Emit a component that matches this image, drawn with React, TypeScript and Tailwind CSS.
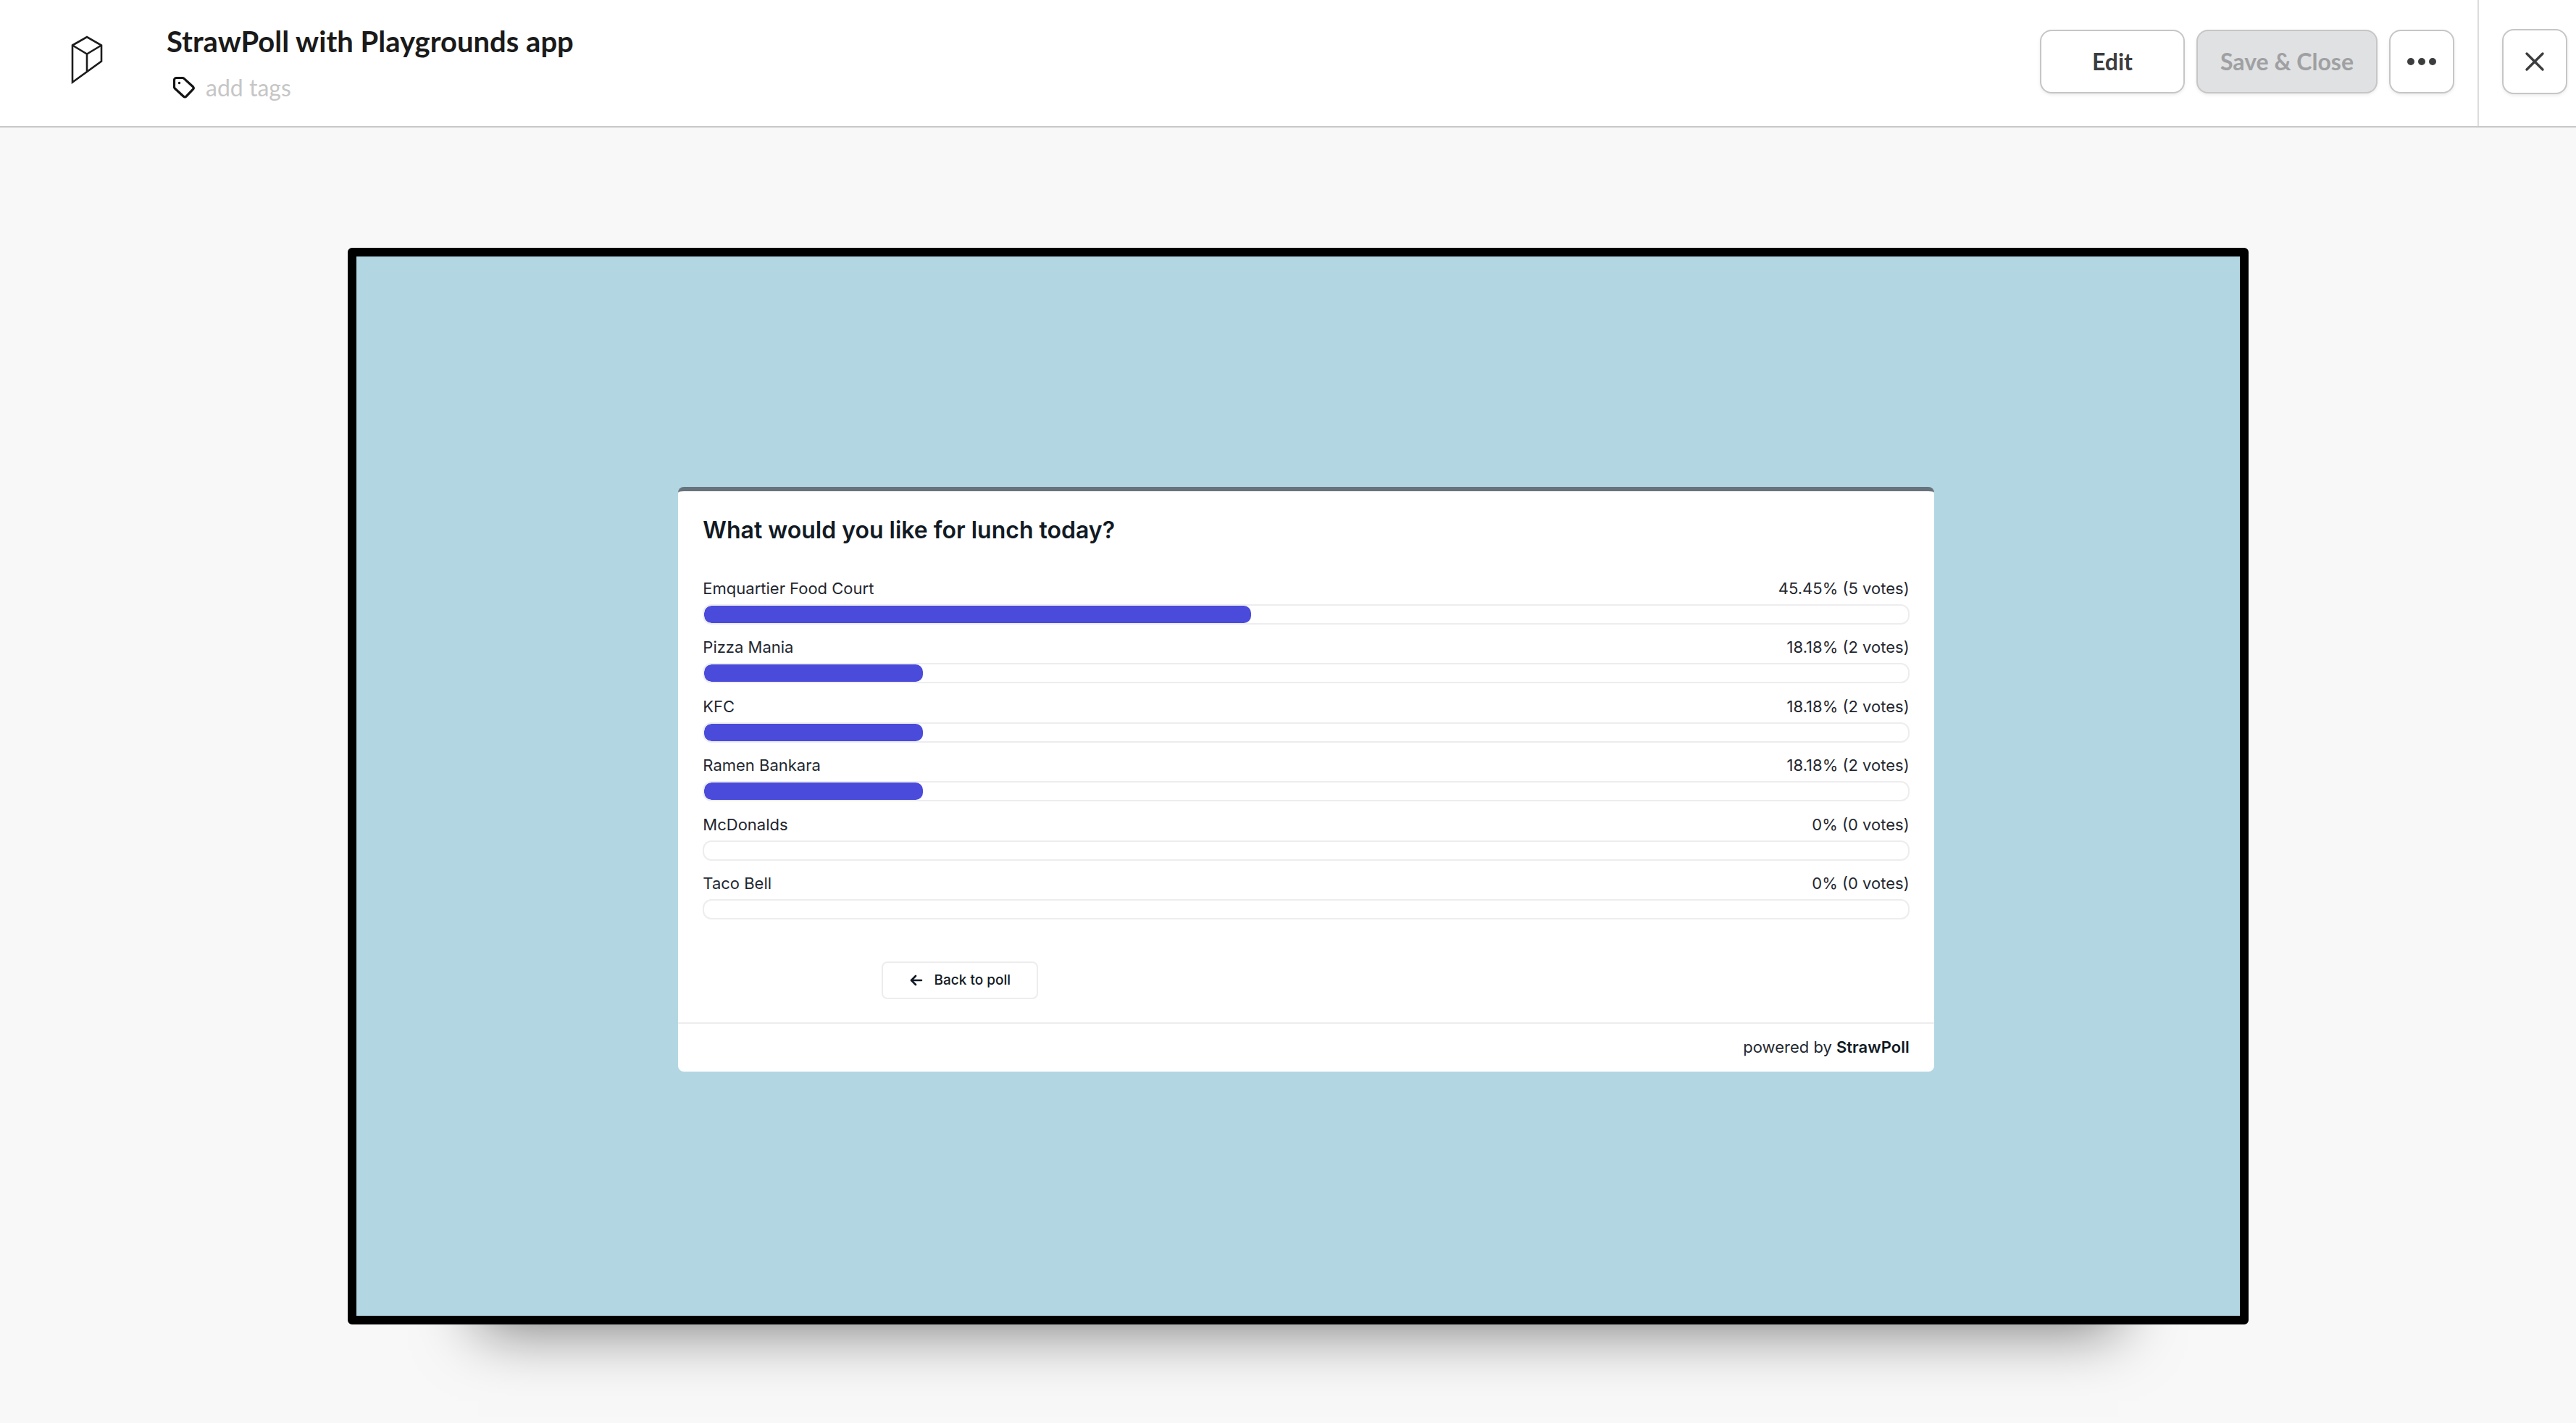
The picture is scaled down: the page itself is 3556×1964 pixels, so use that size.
import React from "react";

type Option = { name: string; percent: number; votes: number };

const options: Option[] = [
  { name: "Emquartier Food Court", percent: 45.45, votes: 5 },
  { name: "Pizza Mania", percent: 18.18, votes: 2 },
  { name: "KFC", percent: 18.18, votes: 2 },
  { name: "Ramen Bankara", percent: 18.18, votes: 2 },
  { name: "McDonalds", percent: 0, votes: 0 },
  { name: "Taco Bell", percent: 0, votes: 0 },
];

function Logo() {
  return (
    <svg viewBox="0 0 44 68" className="h-[68px] w-11" fill="none" stroke="#1c1c1c" strokeWidth="2.6" aria-hidden="true">
      <path d="M2 14.500 22 3l20 11.500v22L2 65.500Z" />
      <path d="M2 14.500l20 12 20-12M22 26.500v24" />
    </svg>
  );
}

function TagIcon() {
  return (
    <svg viewBox="0 0 32 32" className="size-8" fill="none" stroke="#141414" strokeWidth="3.200" strokeLinejoin="round" aria-hidden="true">
      <path d="M5.500 2.500H14a3 3 0 0 1 2 .8L28.500 14.800a2.500 2.500 0 0 1 0 3.400L19 28.200a2.400 2.400 0 0 1-3.500 0L3.300 17a3 3 0 0 1-.8-2V5.500a3 3 0 0 1 3-3Z" />
      <circle cx="9.500" cy="9.500" r="1.700" fill="#141414" stroke="none" />
    </svg>
  );
}

function Header() {
  const button =
    "flex items-center justify-center rounded-2xl border-2 border-[#c6c6c6] text-[32px] font-bold leading-10 shadow-[0_2px_4px_rgba(0,0,0,0.08)]";
  return (
    <header className="flex h-44 items-stretch border-b-2 border-[#c8c8c8] bg-white font-['Lato',sans-serif]">
      <div className="flex w-[230px] shrink-0 items-start pl-[98px] pt-12">
        <Logo />
      </div>
      <div className="flex flex-1 flex-col pt-[31px]">
        <h1 className="text-[40px] font-bold leading-[52px] text-[#1a1a1a]">StrawPoll with Playgrounds app</h1>
        <label className="mt-[18px] flex items-center gap-[14px] pl-2">
          <TagIcon />
          <input
            aria-label="Tags"
            placeholder="add tags"
            className="h-10 w-80 bg-transparent text-[32px] leading-10 outline-none placeholder:text-[#c6c6c6]"
          />
        </label>
      </div>
      <div className="flex items-center gap-4 pb-1 pr-8">
        <button className={`${button} h-[88px] w-[200px] bg-white text-[#3c3d3f]`}>Edit</button>
        <button disabled className={`${button} h-[88px] w-[250px] bg-[#e0e1e3] text-[#9fa0a2]`}>
          Save &amp; Close
        </button>
        <button aria-label="More options" className={`${button} h-[88px] w-[90px] bg-white`}>
          <svg viewBox="0 0 42 12" className="h-3 w-[42px]" fill="#3c3d3f">
            <circle cx="6" cy="6" r="5" />
            <circle cx="21" cy="6" r="5" />
            <circle cx="36" cy="6" r="5" />
          </svg>
        </button>
      </div>
      <div className="flex items-center border-l-2 border-[#dcdcdc] pb-1 pl-8 pr-3">
        <button aria-label="Close" className={`${button} size-[90px] bg-white`}>
          <svg viewBox="0 0 28 28" className="size-7" fill="none" stroke="#3c3d3f" strokeWidth="3.400" strokeLinecap="round">
            <path d="M3 3l22 22M25 3L3 25" />
          </svg>
        </button>
      </div>
    </header>
  );
}

function Result({ name, percent, votes }: Option) {
  return (
    <li>
      <div className="flex justify-between text-[22px] leading-8">
        <span>{name}</span>
        <span>
          {percent}% ({votes} votes)
        </span>
      </div>
      <div className="mt-[6px] h-7 overflow-hidden rounded-xl border-2 border-[#ededef]">
        <div className="h-full rounded-[10px] bg-[#4b4bdb]" style={{ width: `${percent}%` }} />
      </div>
    </li>
  );
}

function PollCard() {
  return (
    <section className="ml-[22px] w-2/3 rounded-lg border-t-[6px] border-[#67737d] bg-white font-['Inter',sans-serif] text-[#1f2730]">
      <div className="px-[34px] pb-8 pt-8">
        <h2 className="text-[32px] font-semibold leading-[44px] text-[#111a24]">What would you like for lunch today?</h2>
        <ul className="mt-[42px] flex h-[473px] flex-col justify-between">
          {options.map((option) => (
            <Result key={option.name} {...option} />
          ))}
        </ul>
        <button className="ml-[247px] mt-[58px] flex h-[52px] w-[216px] items-center justify-center gap-4 rounded-lg border-2 border-[#ededef] text-[19px] font-medium text-[#111a24]">
          <svg viewBox="0 0 18 18" className="size-[18px]" fill="none" stroke="#111a24" strokeWidth="2.600" strokeLinecap="round" strokeLinejoin="round" aria-hidden="true">
            <path d="M16 9H2.500M8 3L2 9l6 6" />
          </svg>
          Back to poll
        </button>
      </div>
      <footer className="border-t-2 border-[#ededef] px-[34px] pb-[18px] pt-4 text-right text-[22px] leading-8">
        powered by{" "}
        <a href="#strawpoll" className="font-semibold text-[#111a24]">
          StrawPoll
        </a>
      </footer>
    </section>
  );
}

export default function App() {
  return (
    <div className="flex min-h-screen flex-col bg-[#f8f8f8]">
      <Header />
      <main className="flex flex-1 justify-center pb-[136px] pl-[480px] pr-[452px] pt-[166px]">
        <div className="flex w-full items-center justify-center rounded-md border-[12px] border-black bg-[#b2d7e2] pb-[19px] shadow-[0_188px_80px_-180px_rgba(0,0,0,0.5)]">
          <PollCard />
        </div>
      </main>
    </div>
  );
}
